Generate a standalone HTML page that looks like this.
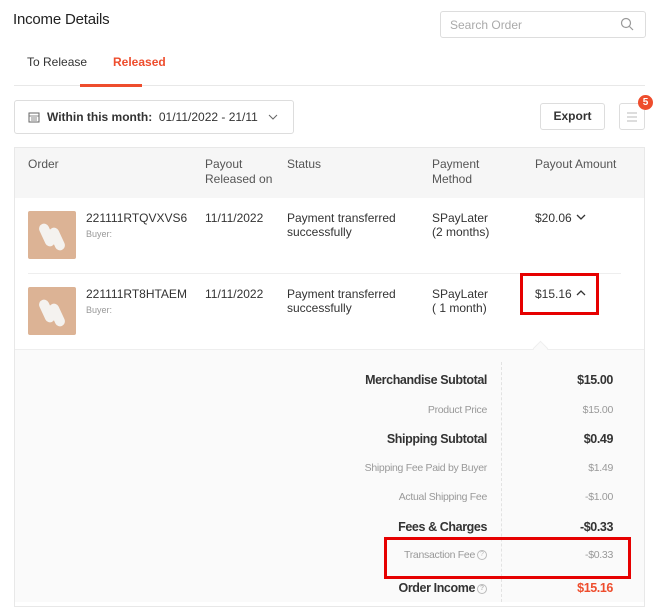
<!DOCTYPE html><html><head><style>
*{margin:0;padding:0;box-sizing:border-box}
body{width:653px;height:602px;overflow:hidden;background:#fff;font-family:"Liberation Sans",sans-serif;color:#333;position:relative;font-size:12px}
.a{position:absolute;white-space:nowrap}
.thumb{position:absolute;width:48px;height:48px;background:#dcb395;border-radius:2px}
.thumb:before,.thumb:after{content:"";position:absolute;width:10px;height:24px;background:#f4f2ef;border-radius:5px;transform:rotate(-25deg)}
.thumb:before{left:14px;top:12px}.thumb:after{left:24px;top:16px}
.r{position:absolute;text-align:right;white-space:nowrap}
.L{right:166px}.V{right:40px}
.b{font-weight:bold;font-size:12.5px;color:#333;letter-spacing:-0.4px}
.g{font-size:10.5px;color:#999;letter-spacing:-0.3px}
.q{display:inline-block;width:10px;height:10px;border:1px solid #bbb;border-radius:50%;font-size:7px;line-height:8px;text-align:center;color:#bbb;vertical-align:middle;margin-left:2px;letter-spacing:0}
</style></head><body>
<div class="a" style="left:13px;top:11px;font-size:15px;color:#222;letter-spacing:-0.2px">Income Details</div>
<div class="a" style="left:440px;top:11px;width:206px;height:27px;border:1px solid #ddd;border-radius:3px"></div>
<div class="a" style="left:450px;top:18px;color:#aaa;font-size:12px">Search Order</div>
<svg class="a" style="left:620px;top:17px" width="14" height="14"><circle cx="6" cy="6" r="4.5" fill="none" stroke="#999" stroke-width="1.2"/><path d="M9.5 9.5L13 13" stroke="#999" stroke-width="1.2"/></svg>
<div class="a" style="left:27px;top:55px;font-size:12px;color:#333">To Release</div>
<div class="a" style="left:113px;top:55px;font-size:12px;color:#ee4d2d;font-weight:bold">Released</div>
<div class="a" style="left:14px;top:85px;width:631px;height:1px;background:#e8e8e8"></div>
<div class="a" style="left:80px;top:84px;width:62px;height:3px;background:#ee4d2d"></div>
<div class="a" style="left:14px;top:100px;width:280px;height:34px;border:1px solid #ddd;border-radius:3px"></div>
<svg class="a" style="left:28px;top:111px" width="12" height="12"><rect x="1" y="2" width="10" height="9" fill="none" stroke="#666"/><path d="M1 5h10M3 7h6M3 9h6" stroke="#666" stroke-width=".7"/></svg>
<div class="a" style="left:47px;top:110px;font-size:12px"><b>Within this month:</b>&nbsp; 01/11/2022 - 21/11</div>
<svg class="a" style="left:268px;top:113px" width="10" height="8"><path d="M1 2l4 4 4-4" fill="none" stroke="#666"/></svg>
<div class="a" style="left:540px;top:103px;width:65px;height:27px;border:1px solid #ddd;border-radius:3px;text-align:center;line-height:25px;font-weight:bold;font-size:12px">Export</div>
<div class="a" style="left:619px;top:103px;width:26px;height:27px;border:1px solid #ddd;border-radius:3px"></div>
<svg class="a" style="left:626px;top:111px" width="12" height="12"><path d="M1 2h10M1 6h10M1 10h10" stroke="#bbb"/></svg>
<div class="a" style="left:638px;top:95px;width:15px;height:15px;border-radius:50%;background:#ee4d2d;color:#fff;font-size:10px;font-weight:bold;text-align:center;line-height:15px">5</div>
<div class="a" style="left:14px;top:147px;width:631px;height:460px;border:1px solid #e8e8e8"></div>
<div class="a" style="left:15px;top:148px;width:629px;height:50px;background:#f6f6f6"></div>
<div class="a" style="left:28px;top:157px;color:#555">Order</div>
<div class="a" style="left:205px;top:157px;color:#555;line-height:15px">Payout<br>Released on</div>
<div class="a" style="left:287px;top:157px;color:#555">Status</div>
<div class="a" style="left:432px;top:157px;color:#555;line-height:15px">Payment<br>Method</div>
<div class="a" style="left:535px;top:157px;color:#555">Payout Amount</div>
<div class="thumb" style="left:28px;top:211px"></div>
<div class="a" style="left:86px;top:211px">221111RTQVXVS6</div>
<div class="a" style="left:86px;top:229px;font-size:9px;color:#999">Buyer:</div>
<div class="a" style="left:205px;top:211px">11/11/2022</div>
<div class="a" style="left:287px;top:211px;line-height:14px">Payment transferred<br>successfully</div>
<div class="a" style="left:432px;top:211px;line-height:14px">SPayLater<br>(2 months)</div>
<div class="a" style="left:535px;top:211px">$20.06</div>
<svg class="a" style="left:576px;top:213px" width="10" height="8"><path d="M1 2l4 4 4-4" fill="none" stroke="#333" stroke-width="1.3"/></svg>
<div class="a" style="left:28px;top:273px;width:593px;height:1px;background:#eee"></div>
<div class="thumb" style="left:28px;top:287px"></div>
<div class="a" style="left:86px;top:287px">221111RT8HTAEM</div>
<div class="a" style="left:86px;top:305px;font-size:9px;color:#999">Buyer:</div>
<div class="a" style="left:205px;top:287px">11/11/2022</div>
<div class="a" style="left:287px;top:287px;line-height:14px">Payment transferred<br>successfully</div>
<div class="a" style="left:432px;top:287px;line-height:14px">SPayLater<br>( 1 month)</div>
<div class="a" style="left:535px;top:287px">$15.16</div>
<svg class="a" style="left:576px;top:289px" width="10" height="8"><path d="M1 6l4-4 4 4" fill="none" stroke="#333" stroke-width="1.3"/></svg>
<div class="a" style="left:520px;top:273px;width:79px;height:42px;border:3px solid #e60000"></div>
<div class="a" style="left:15px;top:349px;width:629px;height:253px;background:#fafafa;border-top:1px solid #eee"></div>
<div class="a" style="left:535px;top:343px;width:11px;height:11px;background:#fafafa;border-left:1px solid #eee;border-top:1px solid #eee;transform:rotate(45deg)"></div>
<div class="a" style="left:501px;top:362px;height:240px;border-left:1px dashed #e2e2e2"></div>
<div class="r L b" style="top:373px">Merchandise Subtotal</div><div class="r V b" style="top:373px">$15.00</div>
<div class="r L g" style="top:404px">Product Price</div><div class="r V g" style="top:404px">$15.00</div>
<div class="r L b" style="top:432px">Shipping Subtotal</div><div class="r V b" style="top:432px">$0.49</div>
<div class="r L g" style="top:462px">Shipping Fee Paid by Buyer</div><div class="r V g" style="top:462px">$1.49</div>
<div class="r L g" style="top:491px">Actual Shipping Fee</div><div class="r V g" style="top:491px">-$1.00</div>
<div class="r L b" style="top:520px">Fees &amp; Charges</div><div class="r V b" style="top:520px">-$0.33</div>
<div class="r L g" style="top:549px">Transaction Fee<span class="q">?</span></div><div class="r V g" style="top:549px">-$0.33</div>
<div class="r L b" style="top:581px">Order Income<span class="q">?</span></div><div class="r V b" style="top:581px;color:#ee4d2d">$15.16</div>
<div class="a" style="left:384px;top:537px;width:247px;height:42px;border:3px solid #e60000"></div>
</body></html>
